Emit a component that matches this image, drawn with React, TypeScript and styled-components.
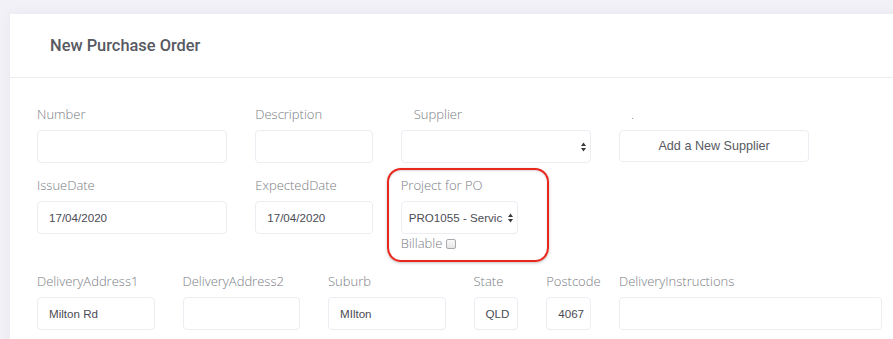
import styled, { createGlobalStyle } from "styled-components";
import { ReactNode } from "react";

const GlobalStyle = createGlobalStyle`
  html, body {
    margin: 0;
    padding: 0;
    background: #f1f1f7;
    overflow: hidden;
  }
  body {
    font-family: "Open Sans", "Liberation Sans", sans-serif;
  }
`;

const Page = styled.div`
  padding: 14px 0 0 10px;
  width: 900px;
`;

const Card = styled.div`
  background: #ffffff;
  width: 900px;
  min-height: 330px;
  box-shadow: 0 1px 12px rgba(69, 65, 78, 0.06);
`;

const CardHeader = styled.div`
  height: 63px;
  display: flex;
  align-items: center;
  padding-left: 40px;
  border-bottom: 1px solid #ebedf2;
`;

const Title = styled.h3`
  margin: 0 0 1px;
  font-family: Roboto, "Liberation Sans", sans-serif;
  font-weight: 500;
  font-size: 16.4px;
  color: #575962;
`;

const CardBody = styled.div`
  padding: 26px 0 0 27px;
`;

const FormGrid = styled.div`
  display: grid;
  width: 845px;
  grid-template-columns: repeat(12, minmax(0, 1fr));
  column-gap: 28px;
  row-gap: 12px;
`;

const Group = styled.div<{ $start: number; $span: number }>`
  grid-column: ${({ $start, $span }) => `${$start} / span ${$span}`};
  position: relative;
  display: flex;
  flex-direction: column;
  min-width: 0;
`;

const Label = styled.label<{ $indent?: number }>`
  display: block;
  height: 20px;
  line-height: 20px;
  margin-bottom: 6px;
  padding-left: ${({ $indent }) => $indent ?? 0}px;
  font-size: 13px;
  font-weight: 300;
  color: #7a7c84;
  white-space: nowrap;
`;

const Field = styled.div`
  box-sizing: border-box;
  height: 33px;
  border: 1px solid #ebedf2;
  border-radius: 4px;
  background: #fff;
  display: flex;
  align-items: center;
  padding: 0 10px 0 11px;
  font-family: "Liberation Sans", Arial, sans-serif;
  font-size: 11.6px;
  color: #4b4c54;
  white-space: nowrap;
  overflow: hidden;
`;

const SelectField = styled(Field)`
  padding: 0 4px 0 7px;
  & > span {
    flex: 1;
    min-width: 0;
    overflow: hidden;
  }
`;

const Button = styled.button`
  box-sizing: border-box;
  height: 32px;
  border: 1px solid #ebedf2;
  border-radius: 4px;
  background: #fff;
  font-family: "Liberation Sans", Arial, sans-serif;
  font-size: 12.6px;
  color: #575962;
  cursor: pointer;
`;

const CheckRow = styled.div`
  display: flex;
  align-items: center;
  gap: 4px;
  height: 16px;
  margin: 1px 0 8px;
  font-size: 13px;
  font-weight: 300;
  color: #7a7c84;
`;

const Box = styled.span`
  box-sizing: border-box;
  width: 10px;
  height: 10px;
  margin-top: 1px;
  border: 1px solid #a9a9ad;
  border-radius: 2px;
  background: linear-gradient(#fafafa, #e6e6e6);
`;

const Highlight = styled.div`
  position: absolute;
  left: -14px;
  right: -31px;
  top: -7px;
  bottom: -3px;
  border: 2.5px solid #e8281e;
  border-radius: 14px;
  box-shadow: 0 1px 3px rgba(0, 0, 0, 0.25), inset 0 1px 2px rgba(0, 0, 0, 0.15);
  pointer-events: none;
`;

const Arrows = () => (
  <svg width="5" height="10" viewBox="0 0 5 10">
    <path d="M2.5 0.5 L5 4 H0 Z" fill="#3a3a3a" />
    <path d="M2.5 9.5 L5 6 H0 Z" fill="#3a3a3a" />
  </svg>
);

type FormFieldProps = {
  label: string;
  start: number;
  span: number;
  value?: string;
  indent?: number;
  children?: ReactNode;
};

const TextField = ({ label, start, span, value, indent }: FormFieldProps) => (
  <Group $start={start} $span={span}>
    <Label $indent={indent}>{label}</Label>
    <Field>{value}</Field>
  </Group>
);

const Select = ({ label, start, span, value, indent, children }: FormFieldProps) => (
  <Group $start={start} $span={span}>
    <Label $indent={indent}>{label}</Label>
    <SelectField>
      <span>{value}</span>
      <Arrows />
    </SelectField>
    {children}
  </Group>
);

export default function App() {
  return (
    <>
      <GlobalStyle />
      <Page>
        <Card>
          <CardHeader>
            <Title>New Purchase Order</Title>
          </CardHeader>
          <CardBody>
            <FormGrid>
              <TextField label="Number" start={1} span={3} />
              <TextField label="Description" start={4} span={2} />
              <Select label="Supplier" start={6} span={3} indent={13} />
              <Group $start={9} $span={3}>
                <Label $indent={12}>.</Label>
                <Button>Add a New Supplier</Button>
              </Group>

              <TextField label="IssueDate" start={1} span={3} value="17/04/2020" />
              <TextField label="ExpectedDate" start={4} span={2} value="17/04/2020" />
              <Select label="Project for PO" start={6} span={2} value="PRO1055 - Servic" indent={-1}>
                <CheckRow>
                  Billable
                  <Box />
                </CheckRow>
                <Highlight />
              </Select>

              <TextField label="DeliveryAddress1" start={1} span={2} value="Milton Rd" />
              <TextField label="DeliveryAddress2" start={3} span={2} />
              <TextField label="Suburb" start={5} span={2} value="MIlton" />
              <TextField label="State" start={7} span={1} value="QLD" />
              <TextField label="Postcode" start={8} span={1} value="4067" />
              <TextField label="DeliveryInstructions" start={9} span={4} />
            </FormGrid>
          </CardBody>
        </Card>
      </Page>
    </>
  );
}
